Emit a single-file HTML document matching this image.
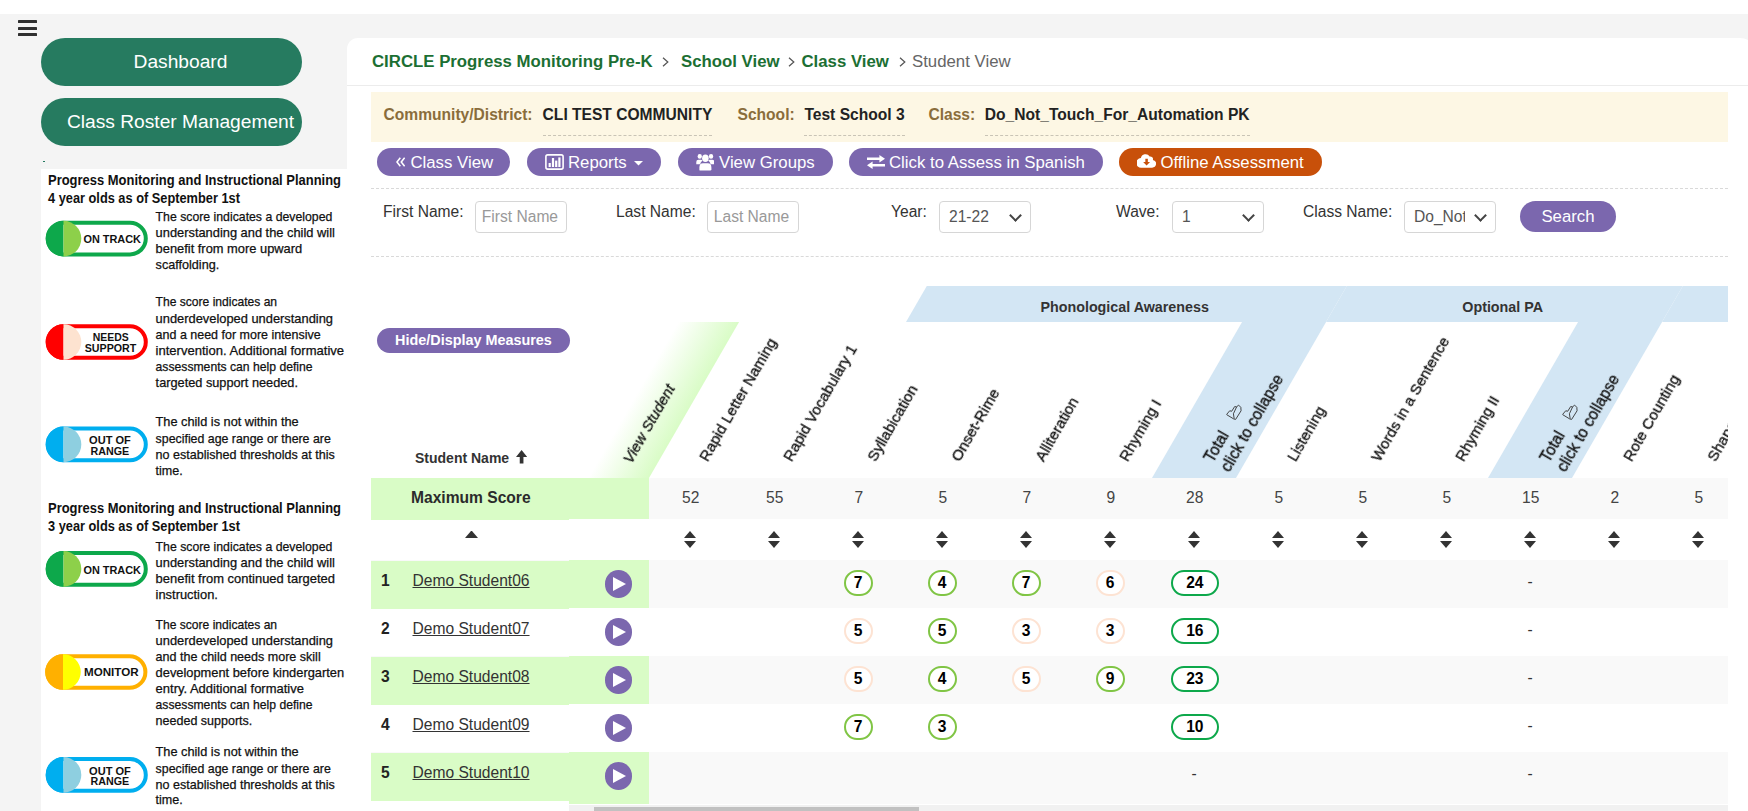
<!DOCTYPE html>
<html lang="en">
<head>
<meta charset="utf-8">
<title>CIRCLE Progress Monitoring Pre-K - Student View</title>
<style>
*{box-sizing:border-box}
html,body{margin:0;padding:0}
body{width:1748px;height:811px;overflow:hidden;position:relative;background:#f4f4f4;font-family:"Liberation Sans",sans-serif;color:#333;font-size:15.6px}
#topstrip{position:absolute;left:0;top:0;width:1748px;height:14px;background:#fff}
#hamb{position:absolute;left:18px;top:20px;width:19px;height:16px}
#hamb i{position:absolute;left:0;width:19px;height:3px;background:#303030;border-radius:.6px}
.navbtn{position:absolute;left:41px;width:261px;height:48px;border-radius:24px;background:#267b60;color:#fff;font-size:19.2px;line-height:47px;text-align:center;white-space:nowrap;padding-left:18px}
#legend{position:absolute;left:41px;top:169px;width:310px;height:642px;background:#fff}
#legend svg{position:absolute;left:-41px;top:-169px}
#legend text{font-family:"Liberation Sans",sans-serif;fill:#111}
#legend text.tr{stroke:#111;stroke-width:.25px}
main{position:absolute;left:347px;top:38px;width:1409px;height:773px;background:#fff;border-radius:11px 16px 0 0}
/* coordinates inside main are page coords minus (347,38); use an inner wrapper offset */
#in{position:absolute;left:-347px;top:-38px;width:1748px;height:811px}
#crumb{position:absolute;left:347px;top:38px;width:1401px;height:48px;border-bottom:1px solid #ececec}
#crumb span,#crumb a{position:absolute;top:14px;font-size:16.8px;line-height:20px;white-space:nowrap}
#crumb a{color:#1c6f33;font-weight:bold}
#crumb .sep{position:absolute;top:19px}
#crumb .cur{color:#666}
#info{position:absolute;left:371px;top:92px;width:1357px;height:50px;background:#fdf7e4}
#info span{position:absolute;top:13px;font-size:15.6px;font-weight:bold;line-height:20px;white-space:nowrap}
#info .k{color:#8a6d3b}
#info .v{color:#222;height:31px;border-bottom:1px dashed #c9c4b6}
.btn{position:absolute;top:148px;height:28px;border-radius:14px;background:#7b67ae;color:#fff;font-size:16.8px;line-height:28px;white-space:nowrap;}
.btn.or{background:#c8500a}
.btn span{position:absolute;top:.8px}
.btn .ic{position:absolute}
.dash1{position:absolute;left:371px;width:1357px;height:0;border-top:1px dashed #d9d9d9}
.flabel{position:absolute;top:202px;font-size:15.6px;line-height:20px;white-space:nowrap;color:#333}
.finput{position:absolute;top:201px;height:32px;width:92px;border:1px solid #d6d6d6;border-radius:4px;background:#fff;font-size:15.6px;line-height:30.4px;padding-left:5.8px;color:#999;white-space:nowrap;overflow:hidden}
.finput.sel{color:#555;padding-left:9px}
.finput.sel:after{content:"";position:absolute;right:10px;top:9px;width:7px;height:7px;border-right:2px solid #444;border-bottom:2px solid #444;transform:rotate(45deg)}
#search{position:absolute;left:1520px;top:201px;width:96px;height:31px;border-radius:16px;background:#7b67ae;color:#fff;font-size:16.8px;line-height:31px;text-align:center}
#hide{position:absolute;left:377px;top:328px;width:193px;height:25px;border-radius:13px;background:#7b67ae;color:#fff;font-size:14.4px;font-weight:bold;line-height:25px;text-align:center}
/* table */
#tbl{position:absolute;left:371px;top:286px;width:1357px;height:525px;overflow:hidden}
#tin{position:absolute;left:-371px;top:-286px;width:2200px;height:811px}
.grp{position:absolute;top:286px;height:36px;background:#d3e6f4;transform:skewX(-30deg);transform-origin:0 100%;margin-left:90px}
.grp span{position:absolute;top:3px;left:50%;line-height:36px;font-size:14.3px;font-weight:bold;color:#333;white-space:nowrap;transform:skewX(30deg) translateX(-50%)}
.hc{position:absolute;top:322px;width:84px;height:156px;transform:skewX(-30deg);transform-origin:0 100%}
.hc.tot{background:#d3e6f4}
.hc.view{background:linear-gradient(90deg,#fff 0%,#fff 24%,#d9fcc6 100%)}
.hc .lbl{position:absolute;left:54px;bottom:14px;transform-origin:0 100%;transform:skewX(30deg) rotate(-60deg);white-space:nowrap;font-size:15.2px;line-height:16px;color:#111;-webkit-text-stroke:.3px #111;will-change:transform}
.hc.view .lbl{font-style:italic;font-size:15px;left:58px;bottom:12.5px}
.hc .lbl.two{line-height:19px;bottom:3px;left:79px;font-size:15.6px}
.hand{position:absolute;top:404px}
.sname{position:absolute;left:415px;top:447.5px;font-size:14px;font-weight:bold;line-height:20px;color:#333;white-space:nowrap}
.sname svg{position:absolute;left:101.2px;top:2.8px}
.maxrow{position:absolute;left:0;top:478px;width:2200px;height:41px;background:#f9f9f9;z-index:1}
.maxl{position:absolute;left:371px;top:0;width:198px;height:42px;background:#d9fcc6;font-weight:bold;font-size:15.6px;line-height:40px;padding-left:40px;color:#2b2b2b}
.maxv{position:absolute;left:569px;top:0;width:80px;height:41px;background:#d9fcc6}
.mx{position:absolute;top:0;margin-left:.8px;width:84px;text-align:center;line-height:40px;font-size:15.6px;color:#444}
.sortrow{position:absolute;left:0;top:519px;width:2200px;height:41px;background:#fff}
.srt{position:absolute;top:12px;margin-left:.8px;width:13px;height:17px}
.srt:before,.srt:after{content:"";position:absolute;left:0;border-left:6.5px solid transparent;border-right:6.5px solid transparent}
.srt:before{top:0;border-bottom:7px solid #333}
.srt:after{top:10px;border-top:7px solid #333}
.up{position:absolute;top:12px;width:13px;height:7px;border-left:6.5px solid transparent;border-right:6.5px solid transparent;border-bottom:7px solid #333}
.row{position:absolute;left:0;width:2200px;height:48px}
.row.odd{background:#f9f9f9}
.nm{position:absolute;left:371px;top:1px;width:198px;height:48px;background:#fff;font-size:15.6px;line-height:20px}
.row.odd .nm,.row.odd .vs{background:#d9fcc6}
.nm b{position:absolute;left:10px;top:10px;color:#222}
.nm a{position:absolute;left:41.5px;top:10px;color:#333;text-decoration:underline;white-space:nowrap}
.vs{position:absolute;left:569px;top:0;width:80px;height:48px;background:#fff}
.row.last,.row.last .vs{height:52px}
.row.last .nm:after{content:"";position:absolute;left:0;top:48px;width:198px;height:5px;background:#fff}
.play{position:absolute;left:36px;top:10.2px;width:27.4px;height:27.6px;border-radius:50%;background:#7b67ae}
.play:after{content:"";position:absolute;left:7.6px;top:6.8px;border-left:13.2px solid #fff;border-top:7px solid transparent;border-bottom:7px solid transparent}
.sc{position:absolute;top:10px;height:26px;min-width:29px;margin-left:-14.5px;border-radius:13px;border:2px solid #80c545;background:#fff;font-weight:bold;font-size:15.6px;line-height:22px;text-align:center;color:#000}
.sc.p{border-color:#fde3d3}
.sc.t{border-color:#0da84b;min-width:48px;margin-left:-23.2px}
.dash{position:absolute;top:12px;width:20px;text-align:center;line-height:20px;color:#333}
#hscroll{position:absolute;left:569px;top:804.5px;width:1159px;height:7px;background:#f1f1f1}
#hscroll i{position:absolute;left:25px;top:2.3px;width:325px;height:6px;background:#c1c1c1}
</style>
</head>
<body>
<div id="topstrip"></div>
<i style="position:absolute;left:42.5px;top:161px;width:2px;height:1px;background:#267b60"></i>
<div id="hamb"><i style="top:0"></i><i style="top:6.5px"></i><i style="top:13px"></i></div>
<nav>
  <a class="navbtn" style="top:38px">Dashboard</a>
  <a class="navbtn" style="top:98px">Class Roster Management</a>
</nav>
<aside id="legend">
<svg width="360" height="811" viewBox="0 0 360 811">
<text x="48" y="184.8" font-size="14.2" font-weight="bold" class="tb" textLength="293.0" lengthAdjust="spacingAndGlyphs">Progress Monitoring and Instructional Planning</text>
<text x="48" y="202.6" font-size="14.2" font-weight="bold" class="tb" textLength="191.9" lengthAdjust="spacingAndGlyphs">4 year olds as of September 1st</text>
<g>
<rect x="47.7" y="222.8" width="98.10000000000001" height="31.6" rx="15.8" fill="#fff" stroke="#0DA84B" stroke-width="4"/>
<path d="M63.5 220.8 A17.8 17.8 0 0 0 63.5 256.40000000000003 Z" fill="#0DA84B"/>
<path d="M63.5 220.8 A17.8 17.8 0 0 1 63.5 256.40000000000003 Z" fill="#8DD04A"/>
<text x="83.4" y="243.4" font-size="10.8" font-weight="bold" fill="#231f20" textLength="57.6" lengthAdjust="spacingAndGlyphs">ON TRACK</text>
</g>
<text x="155.6" y="221.2" font-size="12.4" font-weight="normal" class="tr" textLength="176.7" lengthAdjust="spacingAndGlyphs">The score indicates a developed</text>
<text x="155.6" y="236.9" font-size="12.4" font-weight="normal" class="tr" textLength="179.3" lengthAdjust="spacingAndGlyphs">understanding and the child will</text>
<text x="155.6" y="252.7" font-size="12.4" font-weight="normal" class="tr" textLength="146.6" lengthAdjust="spacingAndGlyphs">benefit from more upward</text>
<text x="155.6" y="268.5" font-size="12.4" font-weight="normal" class="tr" textLength="63.6" lengthAdjust="spacingAndGlyphs">scaffolding.</text>
<g>
<rect x="47.7" y="326.2" width="98.10000000000001" height="31.6" rx="15.8" fill="#fff" stroke="#FF0000" stroke-width="4"/>
<path d="M63.5 324.2 A17.8 17.8 0 0 0 63.5 359.8 Z" fill="#FF0000"/>
<path d="M63.5 324.2 A17.8 17.8 0 0 1 63.5 359.8 Z" fill="#FDE3D0"/>
<text x="92.7" y="340.8" font-size="10.2" font-weight="bold" fill="#231f20" textLength="36.0" lengthAdjust="spacingAndGlyphs">NEEDS</text>
<text x="84.7" y="351.9" font-size="10.2" font-weight="bold" fill="#231f20" textLength="51.6" lengthAdjust="spacingAndGlyphs">SUPPORT</text>
</g>
<text x="155.6" y="306.3" font-size="12.4" font-weight="normal" class="tr" textLength="121.5" lengthAdjust="spacingAndGlyphs">The score indicates an</text>
<text x="155.6" y="322.6" font-size="12.4" font-weight="normal" class="tr" textLength="177.4" lengthAdjust="spacingAndGlyphs">underdeveloped understanding</text>
<text x="155.6" y="338.7" font-size="12.4" font-weight="normal" class="tr" textLength="165.1" lengthAdjust="spacingAndGlyphs">and a need for more intensive</text>
<text x="155.6" y="354.7" font-size="12.4" font-weight="normal" class="tr" textLength="188.5" lengthAdjust="spacingAndGlyphs">intervention. Additional formative</text>
<text x="155.6" y="371.0" font-size="12.4" font-weight="normal" class="tr" textLength="157.0" lengthAdjust="spacingAndGlyphs">assessments can help define</text>
<text x="155.6" y="387.0" font-size="12.4" font-weight="normal" class="tr" textLength="142.4" lengthAdjust="spacingAndGlyphs">targeted support needed.</text>
<g>
<rect x="47.7" y="428.6" width="98.10000000000001" height="31.6" rx="15.8" fill="#fff" stroke="#00AEEF" stroke-width="4"/>
<path d="M63.5 426.6 A17.8 17.8 0 0 0 63.5 462.20000000000005 Z" fill="#00AEEF"/>
<path d="M63.5 426.6 A17.8 17.8 0 0 1 63.5 462.20000000000005 Z" fill="#8ECFE0"/>
<text x="89.1" y="444.4" font-size="10.2" font-weight="bold" fill="#231f20" textLength="41.7" lengthAdjust="spacingAndGlyphs">OUT OF</text>
<text x="90.5" y="454.8" font-size="10.2" font-weight="bold" fill="#231f20" textLength="38.7" lengthAdjust="spacingAndGlyphs">RANGE</text>
</g>
<text x="155.6" y="426.2" font-size="12.4" font-weight="normal" class="tr" textLength="143.0" lengthAdjust="spacingAndGlyphs">The child is not within the</text>
<text x="155.6" y="442.6" font-size="12.4" font-weight="normal" class="tr" textLength="175.2" lengthAdjust="spacingAndGlyphs">specified age range or there are</text>
<text x="155.6" y="458.5" font-size="12.4" font-weight="normal" class="tr" textLength="179.1" lengthAdjust="spacingAndGlyphs">no established thresholds at this</text>
<text x="155.6" y="474.5" font-size="12.4" font-weight="normal" class="tr" textLength="27.2" lengthAdjust="spacingAndGlyphs">time.</text>
<text x="48" y="513.2" font-size="14.2" font-weight="bold" class="tb" textLength="293.0" lengthAdjust="spacingAndGlyphs">Progress Monitoring and Instructional Planning</text>
<text x="48" y="530.6" font-size="14.2" font-weight="bold" class="tb" textLength="191.9" lengthAdjust="spacingAndGlyphs">3 year olds as of September 1st</text>
<g>
<rect x="47.7" y="553.0999999999999" width="98.10000000000001" height="31.6" rx="15.8" fill="#fff" stroke="#0DA84B" stroke-width="4"/>
<path d="M63.5 551.0999999999999 A17.8 17.8 0 0 0 63.5 586.6999999999999 Z" fill="#0DA84B"/>
<path d="M63.5 551.0999999999999 A17.8 17.8 0 0 1 63.5 586.6999999999999 Z" fill="#8DD04A"/>
<text x="83.4" y="573.7" font-size="10.8" font-weight="bold" fill="#231f20" textLength="57.6" lengthAdjust="spacingAndGlyphs">ON TRACK</text>
</g>
<text x="155.6" y="551.4" font-size="12.4" font-weight="normal" class="tr" textLength="176.7" lengthAdjust="spacingAndGlyphs">The score indicates a developed</text>
<text x="155.6" y="567.1" font-size="12.4" font-weight="normal" class="tr" textLength="179.3" lengthAdjust="spacingAndGlyphs">understanding and the child will</text>
<text x="155.6" y="583.0" font-size="12.4" font-weight="normal" class="tr" textLength="179.3" lengthAdjust="spacingAndGlyphs">benefit from continued targeted</text>
<text x="155.6" y="599.0" font-size="12.4" font-weight="normal" class="tr" textLength="62.3" lengthAdjust="spacingAndGlyphs">instruction.</text>
<g>
<rect x="47.2" y="656.1999999999999" width="98.2" height="31.6" rx="15.8" fill="#fff" stroke="#FFB000" stroke-width="4"/>
<path d="M63.0 654.1999999999999 A17.8 17.8 0 0 0 63.0 689.8 Z" fill="#FFB000"/>
<path d="M63.0 654.1999999999999 A17.8 17.8 0 0 1 63.0 689.8 Z" fill="#FFFF00"/>
<text x="84" y="676.2" font-size="10.3" font-weight="bold" fill="#231f20" textLength="54.6" lengthAdjust="spacingAndGlyphs">MONITOR</text>
</g>
<text x="155.6" y="628.6" font-size="12.4" font-weight="normal" class="tr" textLength="121.5" lengthAdjust="spacingAndGlyphs">The score indicates an</text>
<text x="155.6" y="644.9" font-size="12.4" font-weight="normal" class="tr" textLength="177.4" lengthAdjust="spacingAndGlyphs">underdeveloped understanding</text>
<text x="155.6" y="661.1" font-size="12.4" font-weight="normal" class="tr" textLength="165.1" lengthAdjust="spacingAndGlyphs">and the child needs more skill</text>
<text x="155.6" y="677.4" font-size="12.4" font-weight="normal" class="tr" textLength="188.5" lengthAdjust="spacingAndGlyphs">development before kindergarten</text>
<text x="155.6" y="693.3" font-size="12.4" font-weight="normal" class="tr" textLength="148.3" lengthAdjust="spacingAndGlyphs">entry. Additional formative</text>
<text x="155.6" y="709.3" font-size="12.4" font-weight="normal" class="tr" textLength="157.0" lengthAdjust="spacingAndGlyphs">assessments can help define</text>
<text x="155.6" y="725.3" font-size="12.4" font-weight="normal" class="tr" textLength="96.7" lengthAdjust="spacingAndGlyphs">needed supports.</text>
<g>
<rect x="47.7" y="759.0999999999999" width="98.10000000000001" height="31.6" rx="15.8" fill="#fff" stroke="#00AEEF" stroke-width="4"/>
<path d="M63.5 757.0999999999999 A17.8 17.8 0 0 0 63.5 792.6999999999999 Z" fill="#00AEEF"/>
<path d="M63.5 757.0999999999999 A17.8 17.8 0 0 1 63.5 792.6999999999999 Z" fill="#8ECFE0"/>
<text x="89.1" y="774.5" font-size="10.2" font-weight="bold" fill="#231f20" textLength="41.7" lengthAdjust="spacingAndGlyphs">OUT OF</text>
<text x="90.5" y="784.9" font-size="10.2" font-weight="bold" fill="#231f20" textLength="38.7" lengthAdjust="spacingAndGlyphs">RANGE</text>
</g>
<text x="155.6" y="756.4" font-size="12.4" font-weight="normal" class="tr" textLength="143.0" lengthAdjust="spacingAndGlyphs">The child is not within the</text>
<text x="155.6" y="772.5" font-size="12.4" font-weight="normal" class="tr" textLength="175.2" lengthAdjust="spacingAndGlyphs">specified age range or there are</text>
<text x="155.6" y="788.5" font-size="12.4" font-weight="normal" class="tr" textLength="179.1" lengthAdjust="spacingAndGlyphs">no established thresholds at this</text>
<text x="155.6" y="804.4" font-size="12.4" font-weight="normal" class="tr" textLength="27.2" lengthAdjust="spacingAndGlyphs">time.</text>
</svg>
</aside>
<main><div id="in">
  <div id="crumb"><div style="position:absolute;left:-347px;top:0">
    <a style="left:372px">CIRCLE Progress Monitoring Pre-K</a><svg class="sep" style="left:662px" width="7" height="10" viewBox="0 0 7 10"><path d="M1 .8 L5.8 5 L1 9.2" fill="none" stroke="#555" stroke-width="1.25"/></svg>
    <a style="left:681px">School View</a><svg class="sep" style="left:788px" width="7" height="10" viewBox="0 0 7 10"><path d="M1 .8 L5.8 5 L1 9.2" fill="none" stroke="#555" stroke-width="1.25"/></svg>
    <a style="left:801.5px">Class View</a><svg class="sep" style="left:898.6px" width="7" height="10" viewBox="0 0 7 10"><path d="M1 .8 L5.8 5 L1 9.2" fill="none" stroke="#555" stroke-width="1.25"/></svg>
    <span class="cur" style="left:912px">Student View</span>
  </div></div>
  <div id="info"><div style="position:absolute;left:-371px;top:0">
    <span class="k" style="left:383.5px">Community/District:</span><span class="v" style="left:542.6px">CLI TEST COMMUNITY</span>
    <span class="k" style="left:737.5px">School:</span><span class="v" style="left:804.4px">Test School 3</span>
    <span class="k" style="left:928.4px">Class:</span><span class="v" style="left:984.8px">Do_Not_Touch_For_Automation PK</span>
  </div></div>
  <a class="btn" style="left:377px;width:133px"><svg class="ic" style="left:19px;top:9.4px" width="9.4" height="10" viewBox="0 0 10 11" preserveAspectRatio="none"><path d="M4.6 .8 L1 5.5 L4.6 10.2 M9.2 .8 L5.6 5.5 L9.2 10.2" fill="none" stroke="#fff" stroke-width="1.7"/></svg><span style="left:33.4px">Class View</span></a>
  <a class="btn" style="left:527px;width:134px"><svg class="ic" style="left:18px;top:6px" width="19" height="16" viewBox="0 0 19 16"><rect x=".9" y=".9" width="17.2" height="14.2" rx="1.8" fill="none" stroke="#fff" stroke-width="1.6"/><rect x="3.6" y="9" width="2.2" height="4" fill="#fff"/><rect x="6.9" y="4" width="2.2" height="9" fill="#fff"/><rect x="10.1" y="6.6" width="2.2" height="6.4" fill="#fff"/><rect x="13.3" y="3.4" width="2.2" height="9.6" fill="#fff"/></svg><span style="left:41px">Reports</span><svg class="ic" style="left:107px;top:13px" width="9" height="5" viewBox="0 0 9 5"><path d="M0 0 H9 L4.5 4.6 Z" fill="#fff"/></svg></a>
  <a class="btn" style="left:678px;width:155px"><svg class="ic" style="left:17.6px;top:4.6px" width="18.8" height="18" viewBox="0 0 20 17" preserveAspectRatio="none"><g fill="#fff"><circle cx="4" cy="3.2" r="2.3"/><circle cx="16" cy="3.2" r="2.3"/><path d="M.3 10.6 V8.6 Q.3 6.4 2.6 6.4 H5.4 Q6.4 6.4 7 7 Q4.6 8.3 4.5 10.6 Z"/><path d="M19.7 10.6 V8.6 Q19.7 6.4 17.4 6.4 H14.6 Q13.6 6.4 13 7 Q15.4 8.3 15.5 10.6 Z"/><circle cx="10" cy="5" r="3.5"/><path d="M4 16.6 Q3.6 16.6 3.6 15.4 V13.6 Q3.6 9.6 7.4 9.6 H12.6 Q16.4 9.6 16.4 13.6 V15.4 Q16.4 16.6 15 16.6 Z"/></g></svg><span style="left:41px">View Groups</span></a>
  <a class="btn" style="left:849px;width:254px"><svg class="ic" style="left:18px;top:7px" width="18" height="14" viewBox="0 0 18 14"><g fill="#fff"><path d="M0 2.4 H12.4 V0 L18 3.7 L12.4 7.4 V5 H0 Z"/><path d="M18 9 H5.6 V6.6 L0 10.3 L5.6 14 V11.6 H18 Z"/></g></svg><span style="left:40px">Click to Assess in Spanish</span></a>
  <a class="btn or" style="left:1119px;width:203px"><svg class="ic" style="left:18px;top:6.2px" width="19.2" height="14" viewBox="0 0 20 15" preserveAspectRatio="none"><path d="M16.6 6.3 A3 3 0 0 0 13.2 2.6 A5 5 0 0 0 4 4.4 A4.5 4.5 0 0 0 4.5 14.6 H15.8 A4.2 4.2 0 0 0 16.6 6.3 Z" fill="#fff"/><path d="M8.7 5 H11.3 V8.6 H13.6 L10 12.4 L6.4 8.6 H8.7 Z" fill="#c8500a"/></svg><span style="left:41.4px">Offline Assessment</span></a>
  <div class="dash1" style="top:188px"></div>
  <label class="flabel" style="left:383px">First Name:</label><div class="finput" style="left:475px">First Name</div>
  <label class="flabel" style="left:616px">Last Name:</label><div class="finput" style="left:707px">Last Name</div>
  <label class="flabel" style="left:891px">Year:</label><div class="finput sel" style="left:939px">21-22</div>
  <label class="flabel" style="left:1116px">Wave:</label><div class="finput sel" style="left:1172px">1</div>
  <label class="flabel" style="left:1303px">Class Name:</label><div class="finput sel" style="left:1404px"><span style="display:inline-block;width:51.2px;overflow:hidden;vertical-align:top">Do_Not</span></div>
  <a id="search">Search</a>
  <div class="dash1" style="top:256px"></div>
  <a id="hide">Hide/Display Measures</a>
  <div id="tbl"><div id="tin">
<div class="grp" style="left:816px;width:420px"><span>Phonological Awareness</span></div>
<div class="grp" style="left:1236px;width:336px"><span>Optional PA</span></div>
<div class="grp" style="left:1572px;width:420px"></div>
<div class="hc view" style="left:569px;width:80px"><span class="lbl">View Student</span></div>
<div class="hc" style="left:648px"><span class="lbl">Rapid Letter Naming</span></div>
<div class="hc" style="left:732px"><span class="lbl">Rapid Vocabulary 1</span></div>
<div class="hc" style="left:816px"><span class="lbl">Syllabication</span></div>
<div class="hc" style="left:900px"><span class="lbl">Onset-Rime</span></div>
<div class="hc" style="left:984px"><span class="lbl">Alliteration</span></div>
<div class="hc" style="left:1068px"><span class="lbl">Rhyming I</span></div>
<div class="hc tot" style="left:1152px"><span class="lbl two">Total<br>click to collapse</span></div>
<div class="hc" style="left:1236px"><span class="lbl">Listening</span></div>
<div class="hc" style="left:1320px"><span class="lbl">Words in a Sentence</span></div>
<div class="hc" style="left:1404px"><span class="lbl">Rhyming II</span></div>
<div class="hc tot" style="left:1488px"><span class="lbl two">Total<br>click to collapse</span></div>
<div class="hc" style="left:1572px"><span class="lbl">Rote Counting</span></div>
<div class="hc" style="left:1656px"><span class="lbl">Shape Naming</span></div>
<svg class="hand" style="left:1226px" width="17" height="17" viewBox="0 0 17 17"><path d="M0.77 10.23 L3.72 6.78 L5.7 7.27 L8.65 2.59 L10.63 2.83 L12.6 1.11 L14.82 3.33 L15.07 6.78 L9.64 15.41 L7.67 14.92 L0.77 10.72 Z M10.63 2.83 L7.42 9.74 L8.16 14.67" fill="none" stroke="#333" stroke-width=".9" stroke-linejoin="round"/></svg>
<svg class="hand" style="left:1562px" width="17" height="17" viewBox="0 0 17 17"><path d="M0.77 10.23 L3.72 6.78 L5.7 7.27 L8.65 2.59 L10.63 2.83 L12.6 1.11 L14.82 3.33 L15.07 6.78 L9.64 15.41 L7.67 14.92 L0.77 10.72 Z M10.63 2.83 L7.42 9.74 L8.16 14.67" fill="none" stroke="#333" stroke-width=".9" stroke-linejoin="round"/></svg>
<div class="sname">Student Name <svg width="11.2" height="13.5" viewBox="0 0 11.2 13.5"><path d="M5.6 0 L11.2 7 H7.45 V13.5 H3.75 V7 H0 Z" fill="#333"/></svg></div>
<div class="maxrow"><div class="maxl">Maximum Score</div><div class="maxv"></div>
<span class="mx" style="left:648px">52</span>
<span class="mx" style="left:732px">55</span>
<span class="mx" style="left:816px">7</span>
<span class="mx" style="left:900px">5</span>
<span class="mx" style="left:984px">7</span>
<span class="mx" style="left:1068px">9</span>
<span class="mx" style="left:1152px">28</span>
<span class="mx" style="left:1236px">5</span>
<span class="mx" style="left:1320px">5</span>
<span class="mx" style="left:1404px">5</span>
<span class="mx" style="left:1488px">15</span>
<span class="mx" style="left:1572px">2</span>
<span class="mx" style="left:1656px">5</span>
</div>
<div class="sortrow"><i class="up" style="left:465px"></i>
<i class="srt" style="left:683.5px"></i>
<i class="srt" style="left:767.5px"></i>
<i class="srt" style="left:851.5px"></i>
<i class="srt" style="left:935.5px"></i>
<i class="srt" style="left:1019.5px"></i>
<i class="srt" style="left:1103.5px"></i>
<i class="srt" style="left:1187.5px"></i>
<i class="srt" style="left:1271.5px"></i>
<i class="srt" style="left:1355.5px"></i>
<i class="srt" style="left:1439.5px"></i>
<i class="srt" style="left:1523.5px"></i>
<i class="srt" style="left:1607.5px"></i>
<i class="srt" style="left:1691.5px"></i>
</div>
<div class="row odd" style="top:560px">
<div class="nm"><b>1</b><a>Demo Student06</a></div>
<div class="vs"><span class="play"></span></div>
<span class="sc g" style="left:858.0px">7</span>
<span class="sc g" style="left:942.0px">4</span>
<span class="sc g" style="left:1026.0px">7</span>
<span class="sc p" style="left:1110.0px">6</span>
<span class="sc t" style="left:1194.0px">24</span>
<span class="dash" style="left:1520.0px">-</span>
</div>
<div class="row " style="top:608px">
<div class="nm"><b>2</b><a>Demo Student07</a></div>
<div class="vs"><span class="play"></span></div>
<span class="sc p" style="left:858.0px">5</span>
<span class="sc g" style="left:942.0px">5</span>
<span class="sc p" style="left:1026.0px">3</span>
<span class="sc p" style="left:1110.0px">3</span>
<span class="sc t" style="left:1194.0px">16</span>
<span class="dash" style="left:1520.0px">-</span>
</div>
<div class="row odd" style="top:656px">
<div class="nm"><b>3</b><a>Demo Student08</a></div>
<div class="vs"><span class="play"></span></div>
<span class="sc p" style="left:858.0px">5</span>
<span class="sc g" style="left:942.0px">4</span>
<span class="sc p" style="left:1026.0px">5</span>
<span class="sc g" style="left:1110.0px">9</span>
<span class="sc t" style="left:1194.0px">23</span>
<span class="dash" style="left:1520.0px">-</span>
</div>
<div class="row " style="top:704px">
<div class="nm"><b>4</b><a>Demo Student09</a></div>
<div class="vs"><span class="play"></span></div>
<span class="sc g" style="left:858.0px">7</span>
<span class="sc g" style="left:942.0px">3</span>
<span class="sc t" style="left:1194.0px">10</span>
<span class="dash" style="left:1520.0px">-</span>
</div>
<div class="row odd last" style="top:752px">
<div class="nm"><b>5</b><a>Demo Student10</a></div>
<div class="vs"><span class="play"></span></div>
<span class="dash" style="left:1184.0px">-</span>
<span class="dash" style="left:1520.0px">-</span>
</div>
  </div></div>
  <div id="hscroll"><i></i></div>
</div></main>
</body>
</html>
